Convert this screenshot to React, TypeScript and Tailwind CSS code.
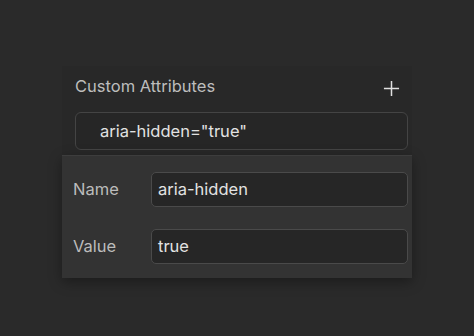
export default function App() {
  return (
    <div
      className="w-[474px] h-[336px] bg-[#2a2a2a] pt-[66px] pl-[62px]"
      style={{ fontFamily: "Inter, 'Noto Sans', sans-serif" }}
    >
      <div className="w-[350px] bg-[#282828] flex flex-col">
        <div className="flex items-center justify-between pl-[13px] pr-[12px] h-[40px]">
          <span className="text-[16.5px] text-[#bdbdbd]">Custom Attributes</span>
          <svg width="17" height="17" viewBox="0 0 18 18" className="mt-[4px]">
            <path d="M9 1v16M1 9h16" stroke="#e0e0e0" strokeWidth="1.6" />
          </svg>
        </div>
        <div className="pl-[13px] pr-[4px] pt-[6px] pb-[5px]">
          <div className="h-[38px] rounded-[6px] border border-[#444] bg-[#262626] flex items-center pl-[24px] text-[16.5px] text-[#e2e2e2]">
            aria-hidden="true"
          </div>
        </div>
        <div className="bg-[#333333] border-t border-[#3d3d3d] shadow-[0_4px_12px_rgba(0,0,0,0.35)] flex flex-col gap-[22px] pt-[16px] pb-[14px] pl-[11px] pr-[4px]">
          <div className="flex items-center">
            <span className="w-[78px] text-[16.5px] text-[#bcbcbc]">Name</span>
            <div className="flex-1 h-[35px] rounded-[5px] border border-[#4a4a4a] bg-[#262626] flex items-center pl-[6px] text-[16.5px] text-[#e2e2e2]">
              aria-hidden
            </div>
          </div>
          <div className="flex items-center">
            <span className="w-[78px] text-[16.5px] text-[#bcbcbc]">Value</span>
            <div className="flex-1 h-[35px] rounded-[5px] border border-[#4a4a4a] bg-[#262626] flex items-center pl-[6px] text-[16.5px] text-[#e2e2e2]">
              true
            </div>
          </div>
        </div>
      </div>
    </div>
  );
}
